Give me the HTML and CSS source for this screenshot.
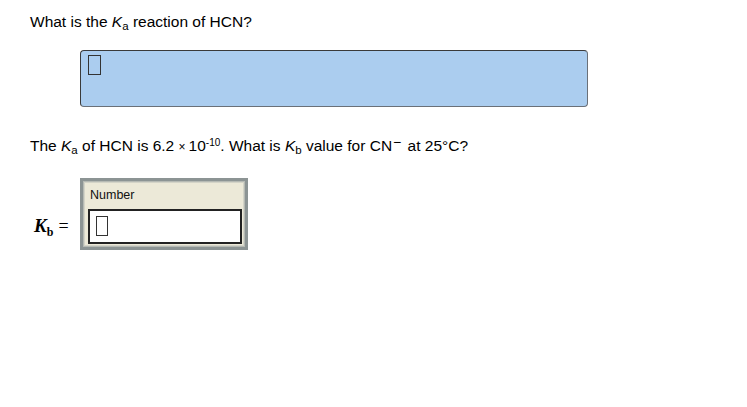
FILE: index.html
```html
<!DOCTYPE html>
<html>
<head>
<meta charset="utf-8">
<link rel="stylesheet" href="styles.css">
</head>
<body>
<div class="page">
  <p class="question">What is the <i>K</i><sub>a</sub> reaction of HCN?</p>
  <div class="answer-box"><span class="cursor"></span></div>
  <p class="question q2">The <i>K</i><sub>a</sub> of HCN is 6.2 <span class="times">×</span>10<sup>-10</sup>. What is <i>K</i><sub>b</sub> value for CN<sup class="minus">−</sup> at 25°C?</p>
  <div class="num-row">
    <div class="kb-label"><b><i>K</i></b><sub><b>b</b></sub><span class="eq">=</span></div>
    <div class="num-widget">
      <div class="num-title">Number</div>
      <div class="num-input"><span class="cursor small"></span></div>
    </div>
  </div>
</div>
</body>
</html>
```
FILE: styles.css
```css
html, body {
  margin: 0;
  padding: 0;
  background: #ffffff;
}
.page {
  padding: 12px 0 0 30px;
  font-family: "Liberation Sans", Arial, sans-serif;
  color: #000;
}
.question {
  margin: 0;
  font-size: 15.5px;
  line-height: 20px;
}
.question sub {
  font-size: 11.5px;
  vertical-align: -3px;
  line-height: 0;
}
.question sup {
  font-size: 10px;
  vertical-align: 5px;
  line-height: 0;
}
.question sup.minus {
  font-size: 14px;
  vertical-align: 4px;
  margin: 0 2px 0 1px;
}
.question .times {
  font-size: 12px;
  margin-right: 3px;
}
.answer-box {
  margin: 18px 0 0 50px;
  width: 508px;
  height: 57px;
  box-sizing: border-box;
  background: #abcdef;
  border: 1px solid #3a3a3a;
  border-right-color: #6a7078;
  border-bottom-color: #6a7078;
  border-radius: 4px;
  padding: 4px 0 0 7px;
}
.cursor {
  display: block;
  width: 13px;
  height: 20px;
  box-sizing: border-box;
  border: 1.5px solid #333;
}
.q2 {
  margin-top: 29px;
}
.num-row {
  display: flex;
  align-items: flex-start;
  margin-top: 21px;
}
.kb-label {
  width: 46px;
  padding: 38px 0 0 4px;
  font-family: "Liberation Serif", "Times New Roman", serif;
  font-size: 19px;
  line-height: 20px;
}
.kb-label sub {
  font-size: 12px;
  vertical-align: -4px;
  line-height: 0;
}
.kb-label .eq {
  margin-left: 5px;
  font-size: 18px;
}
.num-widget {
  width: 168px;
  height: 72px;
  box-sizing: border-box;
  background: #ece9d8;
  border: 3px solid #8c9494;
  box-shadow: inset 0 0 0 1px #b6bab4, inset 0 0 0 2px #d4d4c8;
  padding: 6px 3px 3px 5px;
}
.num-title {
  font-size: 12.5px;
  line-height: 16px;
  padding-left: 2px;
  color: #111;
  height: 22px;
}
.num-input {
  height: 35px;
  box-sizing: border-box;
  background: #fff;
  border: 2px solid #222;
  padding: 5px 0 0 6px;
}
.cursor.small {
  width: 12px;
  height: 20px;
  border: 1px solid #333;
}
```
